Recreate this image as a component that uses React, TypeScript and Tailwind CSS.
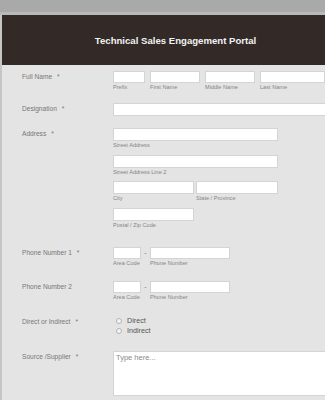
import React from "react";

const font = { fontFamily: '"Liberation Sans", Arial, sans-serif' };

function Label({ text, req }: { text: string; req?: boolean }) {
  return (
    <div className="w-[113px] shrink-0 pl-[20px] h-[12px] leading-[12px] text-[6.6px] text-[#777777] whitespace-nowrap">
      {text}
      {req && <span className="ml-[5px]">*</span>}
    </div>
  );
}

function Field({ w, sub, h = 12 }: { w: string; sub?: string; h?: number }) {
  return (
    <div className={`flex flex-col shrink-0 ${w}`}>
      <div className={`bg-white border border-[#d4d4d4] ${h === 13 ? "h-[13px]" : "h-[12px]"}`} />
      {sub && <div className="h-[9px] leading-[9px] text-[5.6px] text-[#858585] whitespace-nowrap">{sub}</div>}
    </div>
  );
}

export default function App() {
  return (
    <div className="w-[325px] h-[400px] overflow-hidden bg-[#a9a9a9]" style={font}>
      <div className="h-[12px] bg-[#a9a9a9]" />
      <div className="h-[3px] bg-[#b9b9b9]" />
      <div className="border-l-2 border-[#c6c6c6] w-[420px]">
        <div className="h-[50px] bg-[#332a28] flex items-center">
          <div className="w-[323px] text-center text-[9.6px] font-bold text-[#f2f2f2] pl-[24px] pt-[2px]">
            Technical Sales Engagement Portal
          </div>
        </div>
        <div className="bg-[#e4e4e4] pb-[20px]">
          {/* Full Name */}
          <div className="flex pt-[6px]">
            <Label text="Full Name" req />
            <div className="flex gap-[5px] -ml-[2px]">
              <Field w="w-[32px]" sub="Prefix" />
              <Field w="w-[50px]" sub="First Name" />
              <Field w="w-[50px]" sub="Middle Name" />
              <Field w="w-[65px]" sub="Last Name" />
            </div>
          </div>
          {/* Designation */}
          <div className="flex mt-[11px]">
            <Label text="Designation" req />
            <div className="-ml-[2px]">
              <Field w="w-[260px]" h={13} />
            </div>
          </div>
          {/* Address */}
          <div className="flex mt-[12px]">
            <Label text="Address" req />
            <div className="flex flex-col -ml-[2px]">
              <Field w="w-[165px]" sub="Street Address" h={13} />
              <div className="mt-[5px]">
                <Field w="w-[165px]" sub="Street Address Line 2" h={13} />
              </div>
              <div className="flex gap-[2px] mt-[4px]">
                <Field w="w-[81px]" sub="City" h={13} />
                <Field w="w-[82px]" sub="State / Province" h={13} />
              </div>
              <div className="mt-[5px]">
                <Field w="w-[81px]" sub="Postal / Zip Code" h={13} />
              </div>
            </div>
          </div>
          {/* Phone 1 */}
          <div className="flex mt-[17px]">
            <Label text="Phone Number 1" req />
            <div className="flex -ml-[2px]">
              <Field w="w-[28px]" sub="Area Code" />
              <div className="w-[9px] text-center text-[7px] leading-[12px] text-[#777]">-</div>
              <Field w="w-[80px]" sub="Phone Number" />
            </div>
          </div>
          {/* Phone 2 */}
          <div className="flex mt-[13px]">
            <Label text="Phone Number 2" />
            <div className="flex -ml-[2px]">
              <Field w="w-[28px]" sub="Area Code" />
              <div className="w-[9px] text-center text-[7px] leading-[12px] text-[#777]">-</div>
              <Field w="w-[80px]" sub="Phone Number" />
            </div>
          </div>
          {/* Direct or Indirect */}
          <div className="flex mt-[14px]">
            <Label text="Direct or Indirect" req />
            <div className="flex flex-col -ml-[2px] pl-[3px]">
              {["Direct", "Indirect"].map((t) => (
                <div key={t} className="flex items-center h-[10px]">
                  <span className="w-[6px] h-[6px] rounded-full border border-[#b4b4b4] bg-[#f4f4f4]" />
                  <span className="ml-[5px] text-[7.2px] text-[#555]">{t}</span>
                </div>
              ))}
            </div>
          </div>
          {/* Source */}
          <div className="flex mt-[15px]">
            <Label text="Source /Supplier" req />
            <div className="-ml-[2px] w-[260px] h-[45px] bg-white border border-[#d4d4d4] px-[2px] pt-[1px] text-[7.5px] text-[#8a8a8a] leading-[10px]">
              Type here...
            </div>
          </div>
        </div>
      </div>
    </div>
  );
}
